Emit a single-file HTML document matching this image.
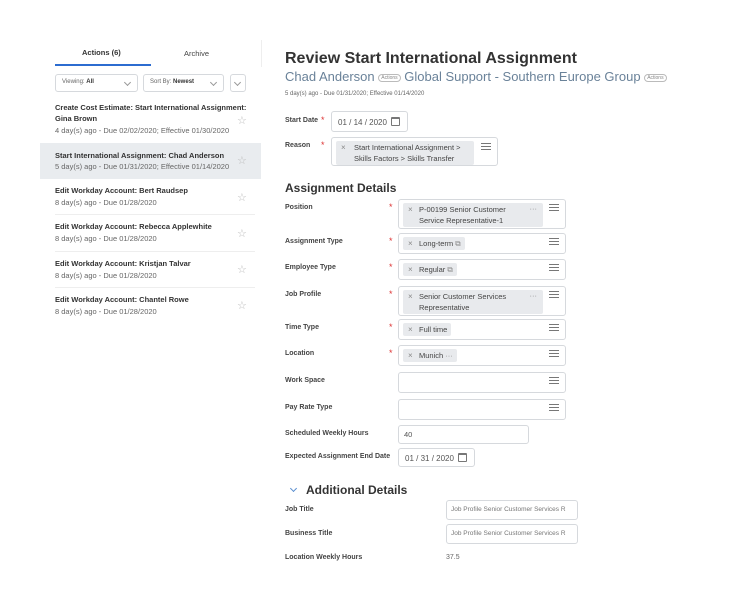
<!DOCTYPE html>
<html><head><style>
*{margin:0;padding:0;box-sizing:border-box}
body{width:750px;height:598px;background:#fff;font-family:"Liberation Sans",sans-serif;color:#333;position:relative;overflow:hidden}
.a{position:absolute;white-space:nowrap}
.t{font-size:7.5px;color:#333}
.lbl{font-size:7px;font-weight:bold;color:#444}
.box{position:absolute;border:1px solid #d6d9dd;border-radius:3px;background:#fff}
.chip{position:absolute;background:#e8eaed;border-radius:2px;font-size:7.5px;color:#444;line-height:11px;padding:1px 4px 1px 16px}
.chip:before{content:"×";position:absolute;left:5px;top:1px;color:#888;font-size:8px}
.ham{position:absolute;right:6px;top:4px;width:10px;height:9px;background:repeating-linear-gradient(#777 0 1px,transparent 1px 3px)}
.req{position:absolute;color:#d33;font-size:9px}
.star{position:absolute;left:237px;font-size:11px;color:#bbb}
.sep{position:absolute;left:55px;width:200px;height:1px;background:#eee}
.dd{position:absolute;border:1px solid #d6d9dd;border-radius:3px;font-size:6px;color:#666;padding:4px 6px;height:18px}
.dd b{color:#333}
.chev{position:absolute;right:7px;top:5px;width:5px;height:5px;border-right:1px solid #999;border-bottom:1px solid #999;transform:rotate(45deg)}
.cal{display:inline-block;width:9px;height:9px;border:1px solid #777;border-radius:1px;margin-left:4px;vertical-align:-1px;border-top-width:2px}
</style></head><body>
<div class="a" style="left:261px;top:40px;width:1px;height:27px;background:#eee"></div>
<div class="a" style="left:82px;top:48px;font-size:7.5px;font-weight:bold;color:#333">Actions (6)</div>
<div class="a" style="left:184px;top:49px;font-size:7.5px;color:#444">Archive</div>
<div class="a" style="left:55px;top:64px;width:96px;height:2px;background:#2c6cd0"></div>
<div class="dd" style="left:55px;top:74px;width:83px">Viewing: <b>All</b><span class="chev"></span></div>
<div class="dd" style="left:143px;top:74px;width:81px">Sort By: <b>Newest</b><span class="chev"></span></div>
<div class="dd" style="left:230px;top:74px;width:16px"><span class="chev" style="right:5px"></span></div>

<div class="a t" style="left:55px;top:103px;font-weight:bold">Create Cost Estimate: Start International Assignment:</div>
<div class="a t" style="left:55px;top:114px;font-weight:bold">Gina Brown</div>
<div class="a t" style="left:55px;top:126px;color:#666">4 day(s) ago - Due 02/02/2020; Effective 01/30/2020</div>
<div class="star" style="top:114px">☆</div>
<div class="a" style="left:40px;top:143px;width:221px;height:36px;background:#e9ecef"></div>
<div class="a t" style="left:55px;top:151px;font-weight:bold">Start International Assignment: Chad Anderson</div>
<div class="a t" style="left:55px;top:162px;color:#666">5 day(s) ago - Due 01/31/2020; Effective 01/14/2020</div>
<div class="star" style="top:154px">☆</div>
<div class="a t" style="left:55px;top:186px;font-weight:bold">Edit Workday Account: Bert Raudsep</div>
<div class="a t" style="left:55px;top:198px;color:#666">8 day(s) ago - Due 01/28/2020</div>
<div class="star" style="top:191px">☆</div>
<div class="sep" style="top:214px"></div>
<div class="a t" style="left:55px;top:222px;font-weight:bold">Edit Workday Account: Rebecca Applewhite</div>
<div class="a t" style="left:55px;top:234px;color:#666">8 day(s) ago - Due 01/28/2020</div>
<div class="star" style="top:227px">☆</div>
<div class="sep" style="top:251px"></div>
<div class="a t" style="left:55px;top:259px;font-weight:bold">Edit Workday Account: Kristjan Talvar</div>
<div class="a t" style="left:55px;top:271px;color:#666">8 day(s) ago - Due 01/28/2020</div>
<div class="star" style="top:263px">☆</div>
<div class="sep" style="top:287px"></div>
<div class="a t" style="left:55px;top:295px;font-weight:bold">Edit Workday Account: Chantel Rowe</div>
<div class="a t" style="left:55px;top:307px;color:#666">8 day(s) ago - Due 01/28/2020</div>
<div class="star" style="top:299px">☆</div>

<div class="a" style="left:285px;top:50px;font-size:16px;font-weight:bold;color:#333">Review Start International Assignment</div>
<div class="a" style="left:285px;top:69px;font-size:13px;color:#6a8299">Chad Anderson <span style="font-size:5px;border:1px solid #bbb;border-radius:5px;padding:0 2px;vertical-align:2px;color:#888">Actions</span> Global Support - Southern Europe Group <span style="font-size:5px;border:1px solid #bbb;border-radius:5px;padding:0 2px;vertical-align:2px;color:#888">Actions</span></div>
<div class="a" style="left:285px;top:91px;font-size:6px;color:#666">5 day(s) ago - Due 01/31/2020; Effective 01/14/2020</div>

<div class="a lbl" style="left:285px;top:117px">Start Date</div><div class="req" style="left:321px;top:115px">*</div>
<div class="box" style="left:331px;top:111px;width:77px;height:21px;font-size:8px;color:#555;padding:5px 6px">01 / 14 / 2020<span class="cal"></span></div>
<div class="a lbl" style="left:285px;top:142px">Reason</div><div class="req" style="left:321px;top:140px">*</div>
<div class="box" style="left:331px;top:137px;width:167px;height:29px"><div class="chip" style="left:4px;top:3px;width:138px;white-space:normal;padding-left:18px">Start International Assignment &gt; Skills Factors &gt; Skills Transfer</div><div class="ham" style="top:5px"></div></div>

<div class="a" style="left:285px;top:181px;font-size:12px;font-weight:bold;color:#333">Assignment Details</div>

<div class="a lbl" style="left:285px;top:204px">Position</div><div class="req" style="left:389px;top:202px">*</div>
<div class="box" style="left:398px;top:199px;width:168px;height:30px"><div class="chip" style="left:4px;top:3px;width:140px;white-space:normal;padding-right:26px">P-00199 Senior Customer Service Representative-1<span style="position:absolute;right:6px;top:0;color:#888">···</span></div><div class="ham"></div></div>

<div class="a lbl" style="left:285px;top:238px">Assignment Type</div><div class="req" style="left:389px;top:236px">*</div>
<div class="box" style="left:398px;top:233px;width:168px;height:21px"><div class="chip" style="left:4px;top:3px">Long-term <span style="color:#888">⧉</span></div><div class="ham"></div></div>

<div class="a lbl" style="left:285px;top:264px">Employee Type</div><div class="req" style="left:389px;top:262px">*</div>
<div class="box" style="left:398px;top:259px;width:168px;height:21px"><div class="chip" style="left:4px;top:3px">Regular <span style="color:#888">⧉</span></div><div class="ham"></div></div>

<div class="a lbl" style="left:285px;top:291px">Job Profile</div><div class="req" style="left:389px;top:289px">*</div>
<div class="box" style="left:398px;top:286px;width:168px;height:30px"><div class="chip" style="left:4px;top:3px;width:140px;white-space:normal;padding-right:26px">Senior Customer Services Representative<span style="position:absolute;right:6px;top:0;color:#888">···</span></div><div class="ham"></div></div>

<div class="a lbl" style="left:285px;top:324px">Time Type</div><div class="req" style="left:389px;top:322px">*</div>
<div class="box" style="left:398px;top:319px;width:168px;height:21px"><div class="chip" style="left:4px;top:3px">Full time</div><div class="ham"></div></div>

<div class="a lbl" style="left:285px;top:350px">Location</div><div class="req" style="left:389px;top:348px">*</div>
<div class="box" style="left:398px;top:345px;width:168px;height:21px"><div class="chip" style="left:4px;top:3px">Munich <span style="color:#888">···</span></div><div class="ham"></div></div>

<div class="a lbl" style="left:285px;top:377px">Work Space</div>
<div class="box" style="left:398px;top:372px;width:168px;height:21px"><div class="ham"></div></div>
<div class="a lbl" style="left:285px;top:404px">Pay Rate Type</div>
<div class="box" style="left:398px;top:399px;width:168px;height:21px"><div class="ham"></div></div>

<div class="a lbl" style="left:285px;top:430px">Scheduled Weekly Hours</div>
<div class="box" style="left:398px;top:425px;width:131px;height:19px;font-size:7.5px;color:#555;padding:4px 5px">40</div>
<div class="a lbl" style="left:285px;top:453px">Expected Assignment End Date</div>
<div class="box" style="left:398px;top:448px;width:77px;height:19px;font-size:8px;color:#555;padding:4px 6px">01 / 31 / 2020<span class="cal"></span></div>

<div class="a" style="left:291px;top:486px;width:5px;height:5px;border-right:1px solid #5b8fd0;border-bottom:1px solid #5b8fd0;transform:rotate(45deg)"></div>
<div class="a" style="left:306px;top:483px;font-size:12px;font-weight:bold;color:#333">Additional Details</div>

<div class="a lbl" style="left:285px;top:506px">Job Title</div>
<div class="box" style="left:446px;top:500px;width:132px;height:20px;font-size:6.5px;color:#777;padding:5px 4px;overflow:hidden;white-space:nowrap">Job Profile Senior Customer Services R</div>
<div class="a lbl" style="left:285px;top:530px">Business Title</div>
<div class="box" style="left:446px;top:524px;width:132px;height:20px;font-size:6.5px;color:#777;padding:5px 4px;overflow:hidden;white-space:nowrap">Job Profile Senior Customer Services R</div>
<div class="a lbl" style="left:285px;top:554px">Location Weekly Hours</div>
<div class="a" style="left:446px;top:554px;font-size:7px;color:#666">37.5</div>
</body></html>
